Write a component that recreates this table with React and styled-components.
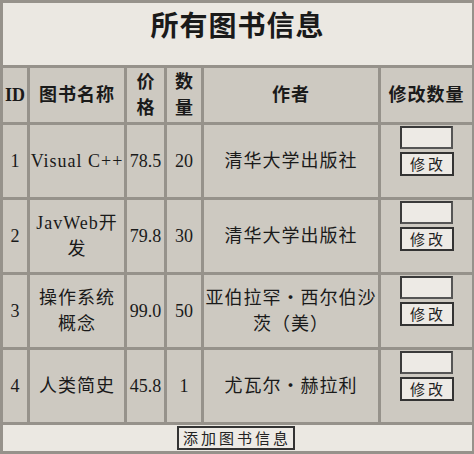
import styled, { createGlobalStyle } from "styled-components";

const GlobalStyle = createGlobalStyle`
  body {
    margin: 0;
    background: #96928b;
    font-family: "Liberation Serif", "Noto Sans CJK SC", serif;
    color: #1a1a1a;
  }
`;

const Table = styled.div`
  display: grid;
  grid-template-columns: 24px 94px 37px 34px 174px 1fr;
  gap: 3px;
  padding: 3px 2px 4px 3px;
  background: #96928b;
  width: 474px;
  box-sizing: border-box;
`;

const Title = styled.div`
  grid-column: 1 / -1;
  height: 62px;
  background: #ebe8e2;
  text-align: center;
  font-size: 28px;
  font-weight: bold;
  letter-spacing: 1px;
  padding-top: 1px;
  box-sizing: border-box;
`;

const Cell = styled.div`
  display: flex;
  align-items: center;
  justify-content: center;
  text-align: center;
  background: #cdc9c1;
  font-size: 18px;
  line-height: 26px;
  white-space: pre-line;
  font-weight: ${(p) => (p.$head ? "bold" : "normal")};
  letter-spacing: ${(p) => (p.$cjk ? "1px" : "0")};
  min-height: ${(p) => (p.$head ? "54px" : "72px")};
`;

const Form = styled.div`
  display: flex;
  flex-direction: column;
  align-items: center;
  gap: 3px;
  align-self: flex-start;
  padding: 1px 0 21px;
`;

const Input = styled.div`
  width: 49px;
  height: 19px;
  background: #edeae5;
  border: 2px solid #3a3a3a;
  border-right-color: #555;
  border-bottom-color: #555;
`;

const Button = styled.div`
  width: 50px;
  height: 20px;
  background: #edeae5;
  border: 2px solid #333;
  font-size: 15px;
  line-height: 20px;
  letter-spacing: 3px;
  text-indent: 3px;
  text-align: center;
  font-family: "Noto Sans CJK SC", sans-serif;
  color: #222;
`;

const Footer = styled.div`
  grid-column: 1 / -1;
  height: 26px;
  background: #ebe8e2;
  display: flex;
  justify-content: center;
  align-items: center;
`;

const AddButton = styled(Button)`
  width: 114px;
  height: 20px;
  margin-right: 4px;
  font-size: 15px;
`;

const books = [
  { id: 1, name: "Visual C++", price: "78.5", count: "20", author: "清华大学出版社" },
  { id: 2, name: "JavWeb开\n发", price: "79.8", count: "30", author: "清华大学出版社" },
  { id: 3, name: "操作系统\n概念", price: "99.0", count: "50", author: "亚伯拉罕・西尔伯沙\n茨（美）" },
  { id: 4, name: "人类简史", price: "45.8", count: "1", author: "尤瓦尔・赫拉利" },
];

export default function App() {
  return (
    <>
      <GlobalStyle />
      <Table>
        <Title>所有图书信息</Title>
        <Cell $head>ID</Cell>
        <Cell $head $cjk>图书名称</Cell>
        <Cell $head>{"价\n格"}</Cell>
        <Cell $head>{"数\n量"}</Cell>
        <Cell $head $cjk>作者</Cell>
        <Cell $head $cjk>修改数量</Cell>
        {books.map((b) => (
          <Row key={b.id} book={b} />
        ))}
        <Footer>
          <AddButton>添加图书信息</AddButton>
        </Footer>
      </Table>
    </>
  );
}

function Row({ book }) {
  return (
    <>
      <Cell>{book.id}</Cell>
      <Cell $cjk>{book.name}</Cell>
      <Cell>{book.price}</Cell>
      <Cell>{book.count}</Cell>
      <Cell $cjk>{book.author}</Cell>
      <Cell>
        <Form>
          <Input />
          <Button>修改</Button>
        </Form>
      </Cell>
    </>
  );
}
